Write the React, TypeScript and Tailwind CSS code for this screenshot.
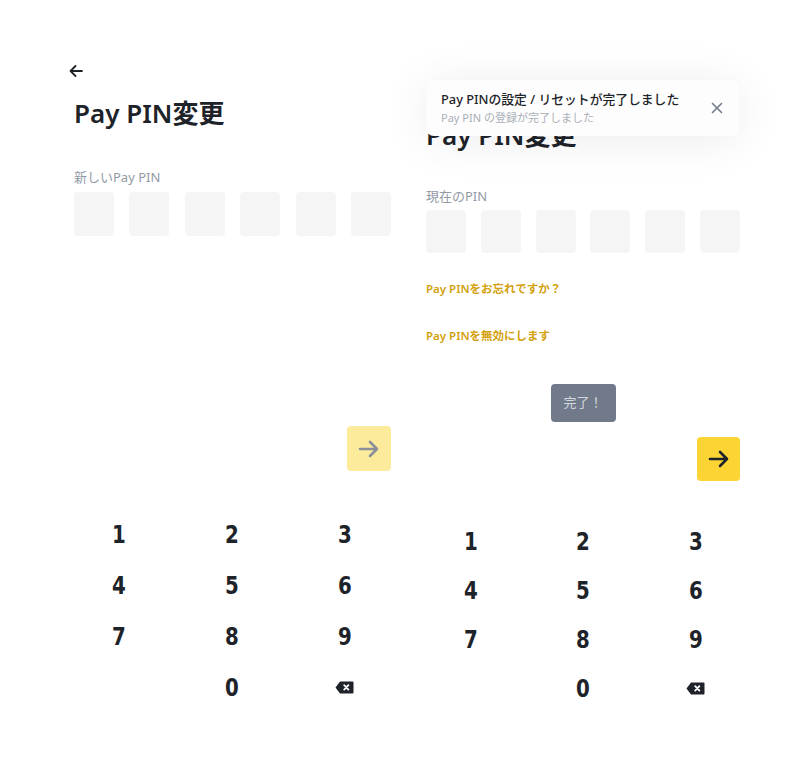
import { useState } from 'react';

const sans = "font-['Noto_Sans','Noto_Sans_CJK_JP',sans-serif]";
const digitFont = "font-['DejaVu_Sans_Condensed','DejaVu_Sans',sans-serif]";

function BackArrow() {
  return (
    <svg width="16" height="14" viewBox="0 0 16 14" fill="none" stroke="#1e2329" strokeWidth="1.8" strokeLinecap="round" strokeLinejoin="round">
      <path d="M14 7H2.5M7.5 2L2.5 7l5 5" />
    </svg>
  );
}

function NextArrow({ color }: { color: string }) {
  return (
    <svg width="22" height="18" viewBox="0 0 22 18" fill="none" stroke={color} strokeWidth="2.6" strokeLinecap="round" strokeLinejoin="round">
      <path d="M2 9h17M12 2l7 7-7 7" />
    </svg>
  );
}

function Backspace() {
  return (
    <svg width="19" height="13" viewBox="0 0 19 13">
      <path d="M5 0.5h12.5a1 1 0 0 1 1 1v10a1 1 0 0 1-1 1H5L0.5 6.5Z" fill="#1e2329" />
      <path d="M9.2 4.2l4.2 4.4M13.4 4.2l-4.2 4.4" stroke="#fff" strokeWidth="1.8" strokeLinecap="round" />
    </svg>
  );
}

function PinBoxes({ height }: { height: string }) {
  return (
    <div className="flex justify-between">
      {[0, 1, 2, 3, 4, 5].map((i) => (
        <div key={i} className={`w-[40px] ${height} rounded-[4px] bg-[#f5f5f5]`} />
      ))}
    </div>
  );
}

function Keypad({ rowHeight }: { rowHeight: string }) {
  const keys = ['1', '2', '3', '4', '5', '6', '7', '8', '9', '', '0', 'del'];
  return (
    <div className="grid grid-cols-3">
      {keys.map((k, i) => (
        <div
          key={i}
          className={`${rowHeight} flex items-center justify-center ${digitFont} text-[25px] font-bold text-[#1e2329]`}
        >
          {k === 'del' ? <Backspace /> : <span className="inline-block scale-x-[0.88]">{k}</span>}
        </div>
      ))}
    </div>
  );
}

function ChangePinStart() {
  return (
    <div className="w-[339px] pl-3 pr-[10px] pt-[59px] flex flex-col">
      <div className="h-[24px] flex items-center -ml-[6px]">
        <BackArrow />
      </div>
      <h1 className={`mt-[13px] ${sans} text-[26px] leading-[34px] font-semibold text-[#1e2329]`}>Pay PIN変更</h1>
      <p className={`mt-[38px] ${sans} text-[13px] leading-[18px] text-[#929aa5]`}>新しいPay PIN</p>
      <div className="mt-[6px]">
        <PinBoxes height="h-[44px]" />
      </div>
      <div className="mt-[190px] self-end w-[44px] h-[45px] rounded-[4px] bg-[#fdeb9c] flex items-center justify-center">
        <NextArrow color="#8a8f99" />
      </div>
      <div className="mt-[38px] -ml-3 -mr-[10px]">
        <Keypad rowHeight="h-[51px]" />
      </div>
    </div>
  );
}

function ChangePinCurrent() {
  const [open] = useState(true);
  return (
    <div className="relative w-[338px] px-3 pt-[118px] flex flex-col">
      <h1 className={`${sans} text-[26px] leading-[34px] font-semibold text-[#1e2329]`}>Pay PIN変更</h1>
      <p className={`mt-[35px] ${sans} text-[13px] leading-[18px] text-[#929aa5]`}>現在のPIN</p>
      <div className="mt-[5px]">
        <PinBoxes height="h-[43px]" />
      </div>
      <a className={`mt-[28px] ${sans} text-[11.5px] leading-[16px] font-semibold text-[#d3a10d]`}>Pay PINをお忘れですか？</a>
      <a className={`mt-[31px] ${sans} text-[11.5px] leading-[16px] font-semibold text-[#d3a10d]`}>Pay PINを無効にします</a>
      <button className={`mt-[40px] self-center w-[65px] h-[38px] rounded-[4px] bg-[#707a8a] ${sans} text-[13px] text-[#d5d8dc]`}>
        完了！
      </button>
      <div className="mt-[15px] self-end w-[43px] h-[44px] rounded-[4px] bg-[#fcd535] flex items-center justify-center">
        <NextArrow color="#1e2329" />
      </div>
      <div className="mt-[36px] -mx-3">
        <Keypad rowHeight="h-[49px]" />
      </div>

      {open && (
        <div className="absolute left-3 top-[80px] w-[313px] h-[56px] rounded-[8px] bg-[#fdfdfd] shadow-[0_4px_48px_rgba(0,0,0,0.08)] flex items-center pl-[15px] pr-[16px]">
          <div className="flex-1">
            <p className={`${sans} text-[12.8px] leading-[18px] font-medium text-[#1e2329]`}>Pay PINの設定 / リセットが完了しました</p>
            <p className={`mt-[2px] ${sans} text-[11px] leading-[16px] text-[#aab0b8]`}>Pay PIN の登録が完了しました</p>
          </div>
          <svg width="12" height="12" viewBox="0 0 12 12" stroke="#707a8a" strokeWidth="1.6" strokeLinecap="round">
            <path d="M1.5 1.5l9 9M10.5 1.5l-9 9" />
          </svg>
        </div>
      )}
    </div>
  );
}

export default function App() {
  return (
    <div className="w-[812px] h-[782px] bg-white flex pl-[62px] gap-[13px]">
      <ChangePinStart />
      <ChangePinCurrent />
    </div>
  );
}
